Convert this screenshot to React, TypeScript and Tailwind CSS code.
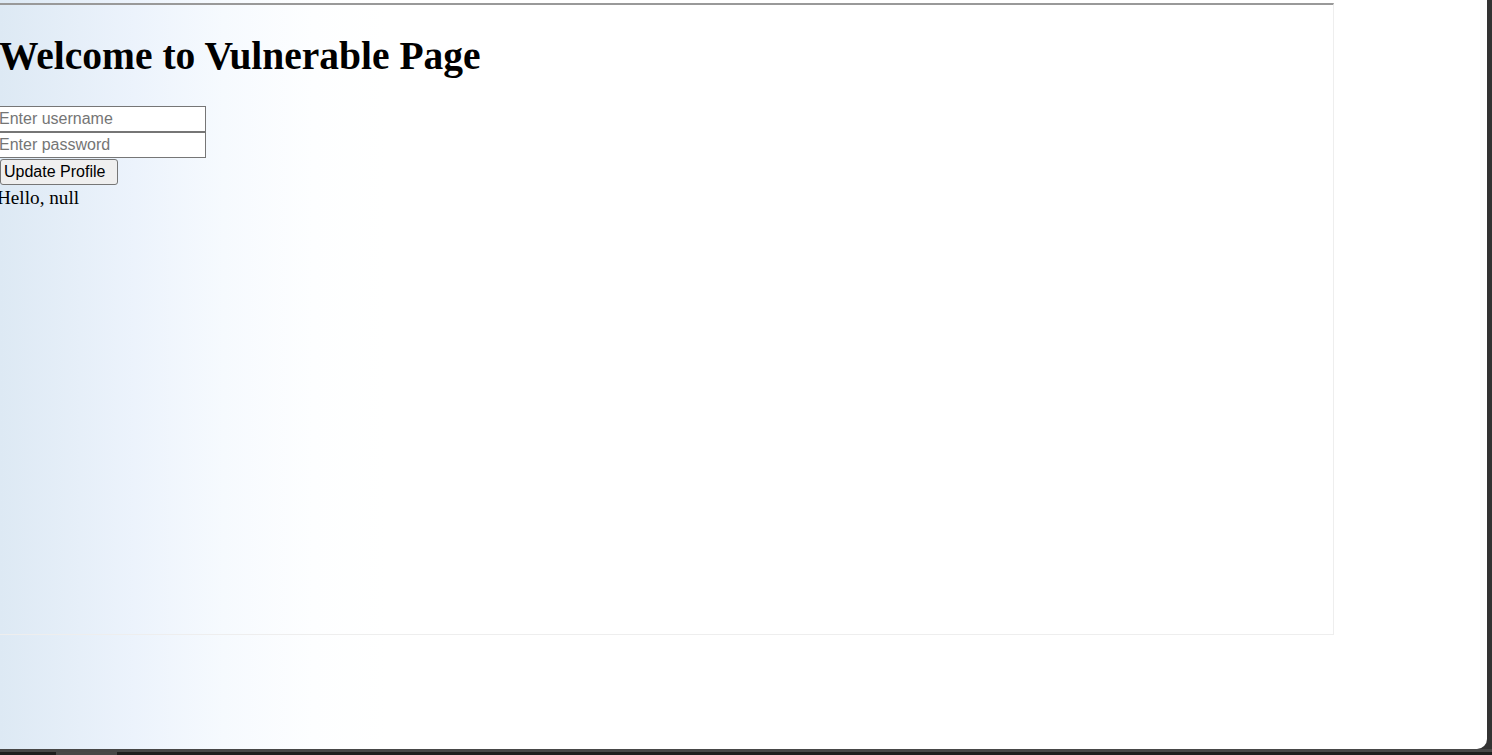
import React from "react";

const App = () => {
  return (
    <div className="flex h-[755px] w-[1492px] flex-col overflow-hidden bg-[#333333]">
      <div className="flex h-[749px] w-[1487px] flex-col overflow-hidden rounded-br-[10px] bg-[linear-gradient(90deg,#dde9f4_0%,#ecf3fc_9%,#f6fafe_15%,#fdfeff_21%,#ffffff_26%)]">
        <div className="ml-[-1px] mt-[3px] flex h-[632px] w-[1335px] flex-col border-t-2 border-r border-b border-t-[#999999] border-r-[#eeeeee] border-b-[#eeeeee] font-['Liberation_Serif',serif] text-black">
          <h1 className="mt-[29px] mb-[28px] text-[39.5px] font-bold leading-[44px]">
            Welcome to Vulnerable Page
          </h1>
          <div className="flex flex-col items-start">
            <input
              type="text"
              placeholder="Enter username"
              className="ml-[-2px] h-[26px] w-[209px] border border-[#767676] bg-white px-[1px] font-['Liberation_Sans',Arial,sans-serif] text-[16px] text-black placeholder:text-[#757575] outline-none"
            />
            <input
              type="password"
              placeholder="Enter password"
              className="ml-[-2px] h-[26px] w-[209px] border border-[#767676] bg-white px-[1px] font-['Liberation_Sans',Arial,sans-serif] text-[16px] text-black placeholder:text-[#757575] outline-none"
            />
            <button
              type="button"
              className="ml-[1px] mt-[1px] h-[26px] w-[118px] rounded-[3px] border border-[#767676] bg-[#efefef] pl-[3px] text-left font-['Liberation_Sans',Arial,sans-serif] text-[16px] leading-[18px] text-black"
            >
              Update Profile
            </button>
          </div>
          <p className="ml-[-2px] mt-[2px] text-[19.2px] leading-[22px]">Hello, null</p>
        </div>
      </div>
      <div className="h-[3px] w-full bg-[#474747]" />
      <div className="flex h-[3px] w-full bg-[#1e1e1e]">
        <div className="ml-[56px] w-[61px] bg-[#484848]" />
      </div>
    </div>
  );
};

export default App;
